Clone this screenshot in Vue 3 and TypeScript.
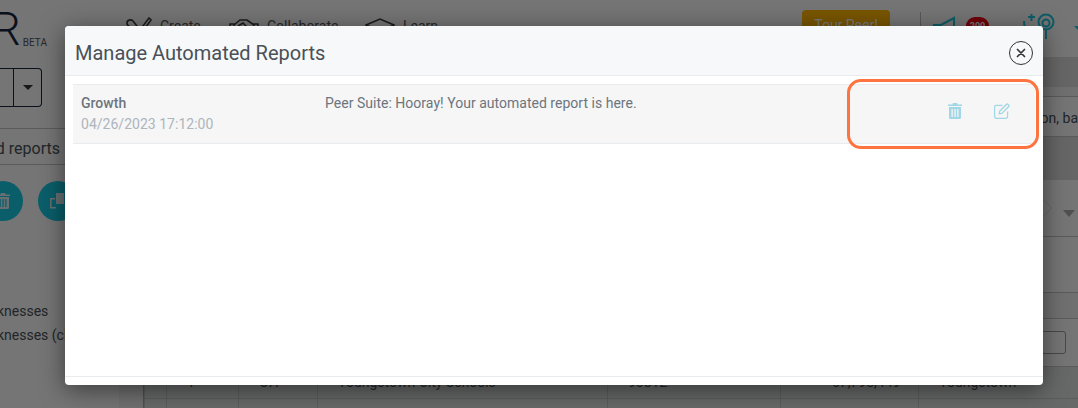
<script setup lang="ts">
interface Row { cells: string[] }
const rows: Row[] = [
  { cells: ['', '1', 'OH', 'Youngstown City Schools', '90812', '67,798,449', 'Youngstown'] },
  { cells: ['', '2', 'OH', 'Jefferson Local', '90813', '1,120,336', 'Jefferson'] },
]
const title = 'Manage Automated Reports'
</script>

<template>
  <div class="page">
    <header class="top">
      <div class="logo"><span class="logo-r">R</span><span class="beta">BETA</span></div>
      <nav class="nav">
        <a class="nav-item create">
          <svg width="26" height="22" viewBox="0 0 26 22" fill="none" stroke="#3c3c3c" stroke-width="1.6"><path d="M1 6c0-3 4-4 6-2l7 9 9-12 2 2-11 15-4-4-6-4c-2-1-3-2-3-4z"/></svg>
          Create
        </a>
        <a class="nav-item collab">
          <svg width="30" height="20" viewBox="0 0 30 20" fill="none" stroke="#3c3c3c" stroke-width="1.6"><path d="M1 7h4v8H1zM25 7h4v8h-4zM5 8l6-5h7l7 5M9 9l5-3 5 5"/></svg>
          Collaborate
        </a>
        <a class="nav-item learn">
          <svg width="30" height="20" viewBox="0 0 30 20" fill="none" stroke="#3c3c3c" stroke-width="1.6"><path d="M1 8l14-6 14 6-14 6zM7 11v6h16v-6"/></svg>
          Learn
        </a>
      </nav>
      <button class="tour">Tour Peer!</button>
      <span class="divider"></span>
      <svg class="mega" width="24" height="24" viewBox="0 0 24 24" fill="none" stroke="#1fc4dc" stroke-width="2"><path d="M1 9h7l13-7v20L8 15H1zM5 15v7"/></svg>
      <span class="badge">200</span>
      <svg class="reader" width="34" height="28" viewBox="0 0 34 28" fill="none" stroke="#1fc4dc" stroke-width="2"><circle cx="23" cy="9" r="7.500"/><path d="M23 17v9M1 8c0 6 2 10 6 12M5 4h7M8.500 1v7"/><circle cx="23" cy="10" r="3.500"/></svg>
      <span class="top-caret"></span>
    </header>

    <div class="content">
      <aside class="side">
        <div class="split">
          <span class="split-main"></span>
          <span class="split-btn"><i class="caret"></i></span>
        </div>
        <div class="reports"><span>Saved reports</span></div>
        <div class="circles">
          <span class="circle">
            <svg width="14" height="16" viewBox="0 0 14 16"><path fill="#d9eef2" fill-rule="evenodd" d="M5 0h4l.6 1.500H14V3H0V1.500h4.400zM1 4h12v10.500a1.500 1.500 0 0 1-1.500 1.500h-9A1.500 1.500 0 0 1 1 14.500zM3.500 6v8h1.300V6zM6.350 6v8h1.300V6zM9.200 6v8h1.300V6z"/></svg>
          </span>
          <span class="circle">
            <svg width="20" height="18" viewBox="0 0 20 18" fill="#d9eef2"><path d="M8 1h8v11H8zM2 6h5v1.500H3.500V15H8v1.500H2z"/></svg>
          </span>
        </div>
        <ul class="list">
          <li>Strengths &amp; Weaknesses</li>
          <li>Strengths &amp; Weaknesses (charts)</li>
        </ul>
      </aside>

      <main class="main">
        <div class="band"></div>
        <div class="search"><span>Search by institution, location, ba</span></div>
        <div class="band band-2"></div>
        <div class="tools">
          <i class="diamond"></i>
          <i class="caret tool-caret"></i>
        </div>
        <div class="strip"></div>
        <div class="filter"><span class="filter-box"></span></div>
        <div class="table">
          <div v-for="r in rows" :key="r.cells[1]" class="tr">
            <span v-for="(c, i) in r.cells" :key="i" class="td">{{ c }}</span>
          </div>
        </div>
      </main>
    </div>

    <div class="backdrop"></div>

    <section class="modal">
      <div class="modal-head">
        <h2>{{ title }}</h2>
        <button class="close" aria-label="Close">
          <svg width="10" height="10" viewBox="0 0 10 10" stroke="#333" stroke-width="1.700" stroke-linecap="round"><path d="M1.500 1.500l7 7M8.500 1.500l-7 7"/></svg>
        </button>
      </div>
      <div class="modal-body">
        <div class="item">
          <div class="who">
            <div class="name">Growth</div>
            <div class="date">04/26/2023 17:12:00</div>
          </div>
          <div class="msg">Peer Suite: Hooray! Your automated report is here.</div>
          <div class="actions">
            <svg width="14" height="16" viewBox="0 0 14 16"><path fill="#a0d6e5" fill-rule="evenodd" d="M5 0h4l.6 1.500H14V3H0V1.500h4.400zM1 4h12v10.500a1.500 1.500 0 0 1-1.500 1.500h-9A1.500 1.500 0 0 1 1 14.500zM3.500 6v8h1.300V6zM6.350 6v8h1.300V6zM9.200 6v8h1.300V6z"/></svg>
            <svg width="16" height="16" viewBox="0 0 16 16" fill="none"><path stroke="#a0d6e5" stroke-width="1.200" d="M13.600 8.500v5a1.800 1.800 0 0 1-1.800 1.800H2.400a1.800 1.800 0 0 1-1.800-1.800V4.100a1.800 1.800 0 0 1 1.800-1.800h6"/><path fill="none" stroke="#a0d6e5" stroke-width="1.300" d="M5.700 8.200L12.600 1.300a.9.900 0 0 1 1.300 0l.9.900a.9.900 0 0 1 0 1.300L7.900 10.400l-2.700.4z"/></svg>
          </div>
        </div>
      </div>
      <div class="modal-foot"></div>
    </section>

    <div class="callout"></div>
  </div>
</template>

<style>
html, body { margin: 0; padding: 0; }
</style>

<style scoped>
.page {
  position: relative;
  width: 1078px;
  height: 408px;
  overflow: hidden;
  background: #f8f8f8;
  font-family: Roboto, "Liberation Sans", sans-serif;
  color: #495057;
}
.top {
  height: 57px;
  display: flex;
  align-items: flex-start;
  box-sizing: border-box;
  padding-top: 10px;
  background: #f8f8f8;
}
.logo { width: 126px; flex: none; display: flex; align-items: flex-end; height: 38px; }
.logo-r { font-size: 47px; line-height: 38px; color: #16263c; margin-left: -9px; font-weight: 300; height: 38px; }
.beta { font-size: 10px; color: #555; margin-left: 2px; margin-bottom: 0; }
.nav { display: flex; width: 676px; flex: none; padding-top: 7px; }
.nav-item { display: flex; align-items: flex-start; gap: 8px; font-size: 14px; color: #555; line-height: 18px; }
.create { width: 103px; }
.collab { width: 136px; }
.tour {
  flex: none;
  width: 88px;
  height: 32px;
  padding: 0 0 2px;
  border: 0;
  border-radius: 4px;
  background: #ffb400;
  color: #fff;
  font: 14px Roboto, sans-serif;
}
.divider { flex: none; width: 1px; height: 30px; margin: 2px 12px 0 30px; background: #bbb; }
.mega { flex: none; margin-top: 6px; }
.badge {
  flex: none;
  width: 23px;
  height: 18px;
  margin: 7px 0 0 9px;
  border-radius: 9px;
  background: #f00014;
  color: #fff;
  font-size: 9px;
  line-height: 18px;
  text-align: center;
  font-weight: 700;
}
.reader { flex: none; margin: 3px 0 0 34px; }
.top-caret {
  flex: none;
  margin: 16px 0 0 17px;
  width: 0; height: 0;
  border: 5px solid transparent;
  border-top-color: #1fc4dc;
}
.content { display: flex; height: 351px; }
.side { width: 119px; flex: none; overflow: hidden; padding-top: 11px; box-sizing: border-box; background: #f8f8f8; }
.split {
  display: flex;
  height: 39px;
  width: 42px;
  box-sizing: border-box;
  border: 1px solid #16263c;
  border-left: 0;
  border-radius: 0 4px 4px 0;
}
.split-main { width: 13px; border-right: 1px solid #16263c; }
.split-btn { flex: 1; display: flex; align-items: center; justify-content: center; }
.caret { width: 0; height: 0; border: 5px solid transparent; border-top-color: #333; border-bottom: 0; }
.reports {
  margin-top: 21px;
  height: 37px;
  border-top: 1px solid #c2c2c2;
  border-bottom: 1px solid #c2c2c2;
  display: flex;
  justify-content: flex-end;
  width: 119px;
  box-sizing: border-box;
  padding: 4px 59px 0 0;
  align-items: center;
  font-size: 16px;
  white-space: nowrap;
}
.circles { display: flex; gap: 15px; margin: 16px 0 0 -17px; }
.circle {
  flex: none;
  width: 40px;
  height: 40px;
  border-radius: 50%;
  background: #17c7e2;
  display: flex;
  align-items: center;
  justify-content: center;
}
.list {
  list-style: none;
  margin: 78px 0 0 -106px;
  padding: 0;
  width: 300px;
  font-size: 14px;
  line-height: 24px;
  white-space: nowrap;
}
.main { flex: 1; min-width: 0; padding-left: 24px; display: flex; flex-direction: column; background: #eeeeee; }
.main > * { flex: none; }
.band { height: 30px; background: #d9d9d9; margin-left: -24px; }
.search {
  height: 41px;
  margin-top: 9px;
  margin-left: -24px;
  padding-top: 3px;
  background: #f8f8f8;
  border-top: 1px solid #c2c2c2;
  border-bottom: 1px solid #c2c2c2;
  box-sizing: border-box;
  display: flex;
  align-items: center;
  justify-content: flex-end;
  white-space: nowrap;
  font-size: 14px;
  overflow: hidden;
}
.band-2 { height: 43px; }
.tools {
  height: 57px;
  background: #f8f8f8;
  border-bottom: 1px solid #c2c2c2;
  box-sizing: border-box;
  display: flex;
  align-items: center;
  justify-content: flex-end;
  gap: 10px;
  padding: 0 3px 0 0;
}
.diamond { width: 14px; height: 14px; border: 1px solid #e6e6e6; transform: rotate(45deg); }
.tool-caret { border-top-color: #aaa; border-width: 7px 6px 0; margin: 10px 0 0 4px; }
.strip { height: 56px; background: #f8f8f8; border-bottom: 1px solid #c2c2c2; box-sizing: border-box; }
.filter {
  height: 48px;
  background: #f8f8f8;
  border-top: 1px solid #c2c2c2;
  margin-top: 25px;
  box-sizing: border-box;
  display: flex;
  justify-content: flex-end;
  padding: 12px 12px 0 0;
}
.filter-box { width: 100px; height: 23px; box-sizing: border-box; border: 1px solid #999; border-radius: 3px; }
.table { display: flex; flex-direction: column; background: #dcdddd; border-left: 1px solid #aaa; }
.tr { display: grid; grid-template-columns: 22px 72px 79px 290px 173px 138px 1fr; height: 32px; border-top: 1px solid #c4c4c4; box-sizing: border-box; }
.td { font-size: 14px; line-height: 30px; border-left: 1px solid #c4c4c4; padding-left: 20px; white-space: nowrap; overflow: hidden; }
.td:first-child { padding: 0; }
.td:nth-child(6) { padding-left: 51px; }
.backdrop { position: absolute; inset: 0; background: rgba(0, 0, 0, 0.53); }
.modal {
  position: absolute;
  left: 65px;
  top: 26px;
  width: 978px;
  height: 359px;
  background: #fff;
  border-radius: 4px;
  box-shadow: 0 5px 24px rgba(0, 0, 0, 0.5);
  display: flex;
  flex-direction: column;
  overflow: hidden;
}
.modal-head {
  height: 50px;
  flex: none;
  box-sizing: border-box;
  background: #f7f8fa;
  border-bottom: 1px solid #e9ecef;
  display: flex;
  align-items: center;
  justify-content: space-between;
  padding: 4px 10px 0 10px;
}
h2 { margin: 0; font-size: 20px; font-weight: 400; color: #495057; }
.close {
  width: 24px;
  height: 24px;
  padding: 0;
  background: transparent;
  border: 1.500px solid #333;
  border-radius: 50%;
  display: flex;
  align-items: center;
  justify-content: center;
}
.modal-body { flex: 1; padding: 8px; }
.item {
  height: 60px;
  box-sizing: border-box;
  background: #f6f6f6;
  border-top: 1px solid #e9ecef;
  border-bottom: 1px solid #e9ecef;
  display: flex;
  font-size: 14px;
  line-height: 21px;
  letter-spacing: 0.02px;
  padding: 8px 0 0 8px;
}
.who { width: 244px; flex: none; }
.name { font-weight: 500; color: #6c757d; }
.date { color: #adb5bd; }
.msg { flex: 1; color: #6c757d; }
.actions { display: flex; gap: 32px; padding: 10px 25px 0 0; align-items: flex-start; }
.modal-foot { height: 9px; flex: none; border-top: 1px solid #e9ecef; box-sizing: border-box; }
.callout {
  position: absolute;
  left: 847px;
  top: 79px;
  width: 192px;
  height: 70px;
  box-sizing: border-box;
  border: 3px solid #ff7340;
  border-radius: 14px;
}
</style>
